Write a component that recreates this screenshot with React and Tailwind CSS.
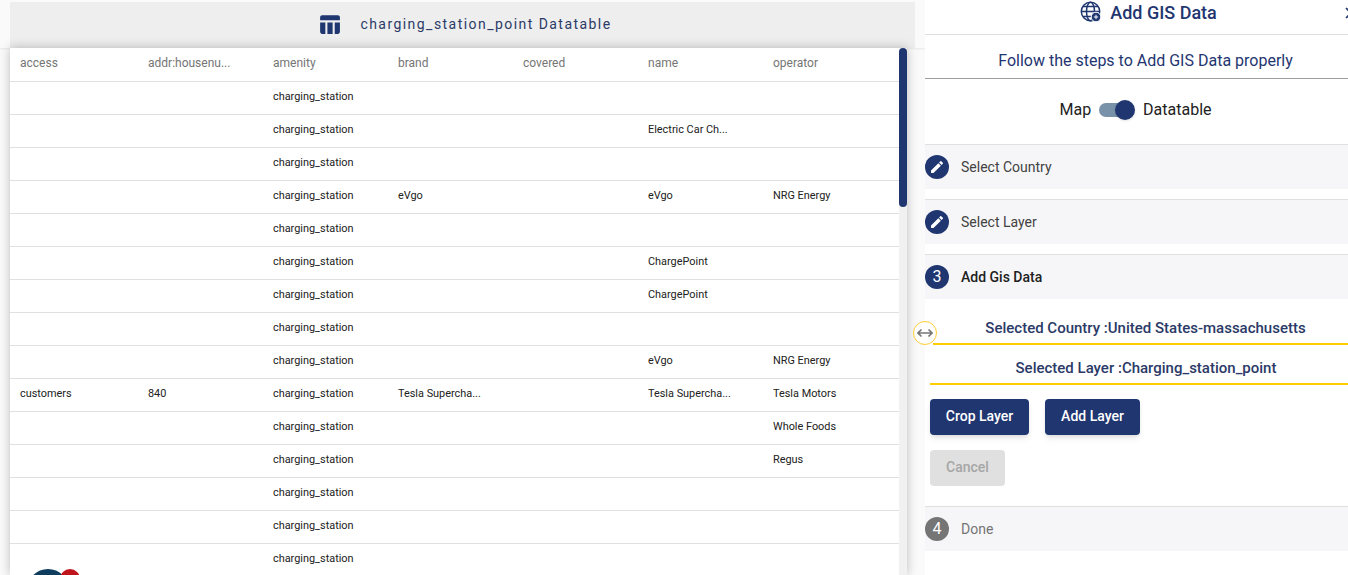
import { MdEdit, MdTableChart } from "react-icons/md";

const rows = [
  { amenity: "charging_station" },
  { amenity: "charging_station", name: "Electric Car Ch..." },
  { amenity: "charging_station" },
  { amenity: "charging_station", brand: "eVgo", name: "eVgo", operator: "NRG Energy" },
  { amenity: "charging_station" },
  { amenity: "charging_station", name: "ChargePoint" },
  { amenity: "charging_station", name: "ChargePoint" },
  { amenity: "charging_station" },
  { amenity: "charging_station", name: "eVgo", operator: "NRG Energy" },
  {
    access: "customers",
    addr: "840",
    amenity: "charging_station",
    brand: "Tesla Supercha...",
    name: "Tesla Supercha...",
    operator: "Tesla Motors",
  },
  { amenity: "charging_station", operator: "Whole Foods" },
  { amenity: "charging_station", operator: "Regus" },
  { amenity: "charging_station" },
  { amenity: "charging_station" },
  { amenity: "charging_station" },
];

const columns = ["access", "addr:housenu...", "amenity", "brand", "covered", "name", "operator"];
const rowGrid = "grid grid-cols-[128px_repeat(5,125px)_1fr] pl-[10px]";

function GlobeIcon() {
  return (
    <svg width="22" height="22" viewBox="0 0 22 22" fill="none" stroke="#1f3670" strokeWidth="1.5">
      <circle cx="10.5" cy="10.5" r="9.2" />
      <ellipse cx="10.5" cy="10.5" rx="4" ry="9.2" />
      <path d="M1.3 10.5h18.4M2.8 5.6h15.4M2.8 15.4h15.4" />
      <circle cx="16" cy="16" r="4.8" fill="#1f3670" stroke="#fff" strokeWidth="1" />
      <path d="M13.8 16h4.4M16 13.8v4.4" stroke="#fff" strokeWidth="1" />
    </svg>
  );
}

function Step({ icon, label, labelClass }) {
  return (
    <div className="flex h-[45px] items-center border-t border-[#e0e0e0] bg-[#f6f6f8]">
      {icon}
      <span className={`ml-3 text-sm ${labelClass}`}>{label}</span>
    </div>
  );
}

function EditBadge() {
  return (
    <div className="flex h-6 w-6 items-center justify-center rounded-full bg-[#1f3670] text-white">
      <MdEdit size={16} />
    </div>
  );
}

function NumberBadge({ n, color }) {
  return (
    <div className={`flex h-6 w-6 items-center justify-center rounded-full text-base text-white ${color}`}>{n}</div>
  );
}

export default function App() {
  return (
    <div className="relative flex h-[575px] w-[1348px] overflow-hidden bg-white font-['Roboto',sans-serif]">
      {/* left side: datatable */}
      <div className="w-[925px] shrink-0 bg-[#fafafa]">
        <div className="h-[48px] pt-[2px] pl-[10px] pr-[10px] shadow-[0_1px_2px_rgba(0,0,0,0.08)]">
          <div className="flex h-[46px] items-center justify-center bg-[#eeeeee] pb-[2px] pl-[4px] text-[#1f3670]">
            <MdTableChart size={25} />
            <span className="ml-[18px] text-[14px] tracking-[1.45px] text-[#2b3a67]">charging_station_point Datatable</span>
          </div>
        </div>
        <div className="relative ml-[10px] h-[527px] w-[897px] overflow-hidden bg-white shadow-[0_0_10px_rgba(0,0,0,0.25)]">
          <div className={`${rowGrid} h-[34px] items-center border-b border-[#e0e0e0] pb-[4px] text-xs text-[#757575]`}>
            {columns.map((c) => (
              <div key={c}>{c}</div>
            ))}
          </div>
          {rows.map((r, i) => (
            <div
              key={i}
              className={`${rowGrid} h-[33px] items-center border-b border-[#e0e0e0] pb-[2px] text-[10.9px] text-[#212121]`}
            >
              <div>{r.access}</div>
              <div>{r.addr}</div>
              <div>{r.amenity}</div>
              <div>{r.brand}</div>
              <div></div>
              <div>{r.name}</div>
              <div>{r.operator}</div>
            </div>
          ))}
          <div className="absolute top-0 right-0 h-[527px] w-2 bg-[#f1f1f1]">
            <div className="h-[159px] w-2 rounded-full bg-[#1f3670]"></div>
          </div>
        </div>
      </div>

      {/* right side: stepper */}
      <div className="w-[423px] shrink-0 bg-white">
        <div className="relative flex h-[35px] items-center justify-center border-b border-[#e0e0e0] pb-[10px] pl-[24px]">
          <GlobeIcon />
          <span className="ml-2 text-[18px] font-medium text-[#1f3670]">Add GIS Data</span>
          <svg className="absolute top-[7px] left-[420px]" width="12" height="12" viewBox="0 0 12 12" stroke="#1f3670" strokeWidth="1.6">
            <path d="M1 1l10 10M11 1 1 11" />
          </svg>
        </div>
        <div className="flex h-[44px] items-center justify-center border-b border-[#9e9e9e] pt-[8px] pl-[18px] text-[16px] text-[#1f3670]">
          Follow the steps to Add GIS Data properly
        </div>
        <div className="flex h-[65px] items-center justify-center pr-[2px] pb-[4px] text-[#212121]">
          <span className="text-[16px]">Map</span>
          <div className="relative mr-[10px] ml-2 h-[14px] w-[34px] rounded-full bg-[#7892a9]">
            <div className="absolute top-[-3px] left-[16px] h-5 w-5 rounded-full bg-[#1f3670] shadow"></div>
          </div>
          <span className="text-[16px]">Datatable</span>
        </div>
        <Step icon={<EditBadge />} label="Select Country" labelClass="text-[#424242]" />
        <div className="h-[10px]"></div>
        <Step icon={<EditBadge />} label="Select Layer" labelClass="text-[#424242]" />
        <div className="h-[10px]"></div>
        <Step
          icon={<NumberBadge n="3" color="bg-[#1f3670]" />}
          label="Add Gis Data"
          labelClass="font-medium text-[#212121]"
        />
        <div className="pt-[18px] pl-[5px]">
          <div className="ml-[3px] border-b-2 border-[#ffcc00] pb-[3px] pl-[10px] text-center text-[15px] font-medium text-[#2b3a67]">
            Selected Country :United States-massachusetts
          </div>
          <div className="mt-[12px] border-b-2 border-[#ffcc00] pb-[4px] pl-[14px] text-center text-[15px] font-medium text-[#2b3a67]">
            Selected Layer :Charging_station_point
          </div>
          <div className="mt-[14px] flex gap-4">
            <button className="h-[36px] w-[99px] rounded bg-[#1f3670] pb-[2px] text-sm font-medium text-white shadow-md">
              Crop Layer
            </button>
            <button className="h-[36px] w-[95px] rounded bg-[#1f3670] pb-[2px] text-sm font-medium text-white shadow-md">
              Add Layer
            </button>
          </div>
          <button className="mt-[15px] h-[36px] w-[75px] rounded bg-[#e0e0e0] pb-[2px] text-sm font-medium text-[#a6a6a6]">
            Cancel
          </button>
        </div>
        <div className="h-[20px]"></div>
        <Step
          icon={<NumberBadge n="4" color="bg-[#757575]" />}
          label="Done"
          labelClass="text-[#757575]"
        />
      </div>

      {/* resize handle */}
      <div className="absolute top-[321px] left-[913px] flex h-6 w-6 items-center justify-center rounded-full border border-[#ffcc33] bg-white text-[#757575]">
        <svg width="16" height="10" viewBox="0 0 16 10" fill="none" stroke="currentColor" strokeWidth="1.6">
          <path d="M1 5h14M4.5 1.5 1 5l3.5 3.5M11.5 1.5 15 5l-3.5 3.5" />
        </svg>
      </div>

      {/* logo peeking in at the bottom */}
      <svg className="absolute top-[569px] left-[30px]" width="52" height="6" viewBox="0 0 52 6">
        <circle cx="18" cy="21" r="21" fill="#0f3d5e" />
        <circle cx="40" cy="10" r="10" fill="#c0141c" />
      </svg>
    </div>
  );
}
